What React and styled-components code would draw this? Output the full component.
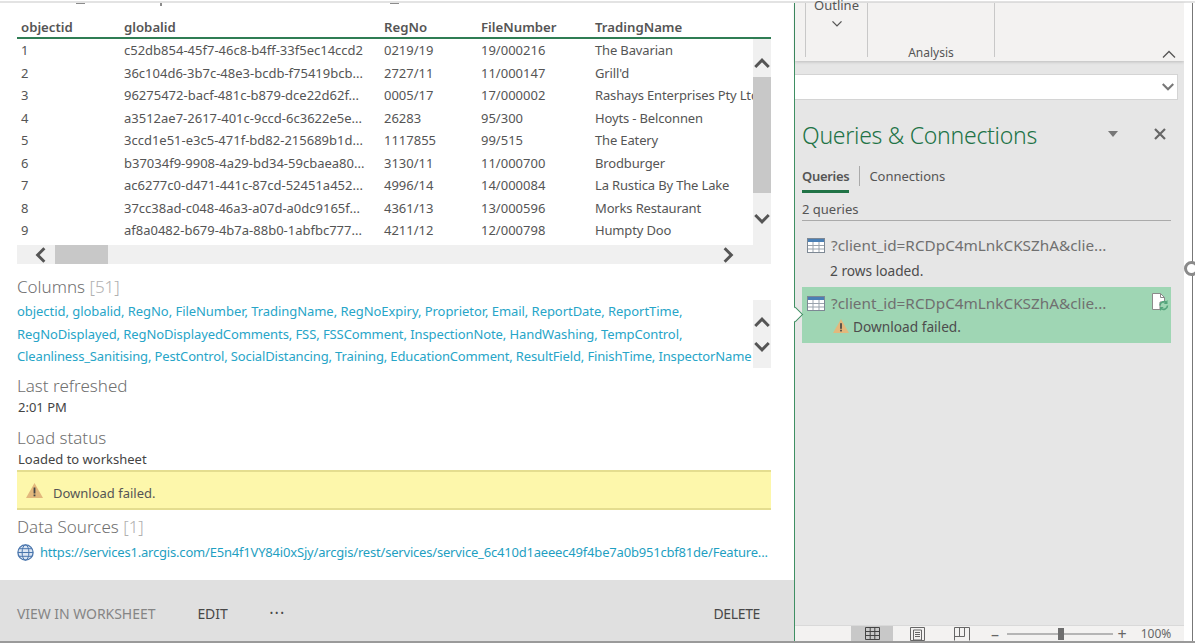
import React from 'react'
import styled, { createGlobalStyle } from 'styled-components'

const GlobalStyle = createGlobalStyle`
  html, body {
    margin: 0;
    padding: 0;
    background: #fff;
    overflow: hidden;
  }
  * { box-sizing: border-box; }
  svg { flex: none; }
`

const FONT = `'Noto Sans', 'Open Sans', sans-serif`

const Page = styled.div`
  width: 1195px;
  height: 643px;
  display: flex;
  flex-direction: column;
  overflow: hidden;
  font-family: ${FONT};
  color: #4a4a4a;
  background: #fff;
`

const TopEdge = styled.div`
  height: 3px;
  flex: none;
  position: relative;
  border-top: 1px solid transparent;
  border-bottom: 2px solid #e3e3e3;
`

const EdgeTicks = styled.div`
  position: absolute;
  top: 2px;
  left: 0;
  display: flex;
  z-index: 1;
`

const EdgeTick = styled.div`
  width: ${(p) => p.$w}px;
  height: ${(p) => p.$h}px;
  margin-left: ${(p) => p.$gap}px;
  background: #8c8c8c;
`

const Main = styled.div`
  flex: 1;
  min-height: 0;
  display: flex;
`

const BottomEdge = styled.div`
  height: 2px;
  flex: none;
  background: #9a9a9a;
`

/* left: query preview flyout */
const Flyout = styled.div`
  width: 795px;
  flex: none;
  display: flex;
  flex-direction: column;
  border-right: 1px solid #3f8f63;
  background: #fff;
`

const FlyoutBody = styled.div`
  flex: 1;
  min-height: 0;
  padding: 14px 23px 0 17px;
  display: flex;
  flex-direction: column;
`

const TableHead = styled.div`
  height: 22px;
  padding-bottom: 1px;
  display: grid;
  grid-template-columns: 107px 260px 97px 114px 1fr;
  align-items: center;
  border-bottom: 2px solid #2f7d54;
  font-size: 13.2px;
  font-weight: 600;
  color: #555;
  span:first-child { padding-left: 4px; }
`

const TableBody = styled.div`
  display: flex;
  height: 206px;
`

const Rows = styled.div`
  flex: 1;
  min-width: 0;
  overflow: hidden;
`

const Row = styled.div`
  height: 22.5px;
  display: grid;
  grid-template-columns: 107px 260px 97px 114px 1fr;
  align-items: center;
  font-size: 13px;
  color: #555;
  white-space: nowrap;
  span:first-child { padding-left: 4px; }
  span:last-child { letter-spacing: -0.15px; }
`

const VScroll = styled.div`
  width: 18px;
  flex: none;
  background: #f0f0f0;
  display: flex;
  flex-direction: column;
  align-items: center;
`

const ArrowSlot = styled.div`
  height: ${(p) => p.$h}px;
  width: ${(p) => (p.$w ? `${p.$w}px` : 'auto')};
  margin-left: ${(p) => (p.$push ? 'auto' : '0')};
  padding: ${(p) => p.$pad || '0'};
  display: flex;
  align-items: center;
  justify-content: center;
  flex: none;
`

const VThumb = styled.div`
  width: 100%;
  height: 116px;
  flex: none;
  background: #c8c8c8;
`

const HScroll = styled.div`
  height: 19px;
  flex: none;
  background: #f0f0f0;
  display: flex;
  align-items: center;
`

const HThumb = styled.div`
  width: 53px;
  height: 100%;
  background: #c8c8c8;
`

const SectionTitle = styled.div`
  font-size: 17px;
  font-weight: 300;
  line-height: 24px;
  color: #707070;
  margin-top: ${(p) => p.$top}px;
`

const Count = styled.span`
  color: #b0b0b0;
`

const ColumnsBlock = styled.div`
  display: flex;
  height: 68px;
  margin-top: 1px;
`

const ColumnsText = styled.div`
  flex: 1;
  min-width: 0;
`

const ColumnsLine = styled.div`
  height: 22.5px;
  line-height: 22.5px;
  font-size: 13px;
  letter-spacing: ${(p) => p.$ls}px;
  color: #27a5c8;
  white-space: nowrap;
`

const MiniScroll = styled.div`
  width: 18px;
  flex: none;
  background: #f0f0f0;
  display: flex;
  flex-direction: column;
  align-items: center;
  justify-content: center;
  gap: 7px;
`

const PlainText = styled.div`
  font-size: 13px;
  line-height: 18px;
  color: #444;
  padding-left: 1px;
`

const WarnBanner = styled.div`
  height: 40px;
  margin-top: 2px;
  flex: none;
  background: #fdf7ab;
  border-top: 2px solid #e4dd8f;
  border-bottom: 2px solid #e4dd8f;
  display: flex;
  align-items: center;
  padding-left: 9px;
  gap: 10px;
  font-size: 13px;
  color: #555;
`

const BannerText = styled.span`
  padding-top: 6px;
`

const SourceRow = styled.div`
  display: flex;
  align-items: center;
  gap: 6px;
  margin-top: 3px;
  height: 20px;
  font-size: 13px;
  letter-spacing: -0.19px;
  color: #1f9fc2;
  white-space: nowrap;
`

const FlyoutFooter = styled.div`
  height: 61px;
  flex: none;
  background: #e0e0e0;
  display: flex;
  align-items: center;
  padding: 6px 34px 0 17px;
  font-size: 14px;
  letter-spacing: -0.05px;
`

const FooterAction = styled.div`
  color: ${(p) => (p.$muted ? '#858585' : '#484848')};
  margin-right: ${(p) => p.$gap || 0}px;
  margin-left: ${(p) => (p.$push ? 'auto' : '0')};
  letter-spacing: ${(p) => (p.$push ? '-0.35px' : 'inherit')};
`

const Dots = styled.div`
  font-size: 9px;
  letter-spacing: 2px;
  color: #484848;
  margin-top: -3px;
`

/* right: task pane */
const Side = styled.div`
  width: 389px;
  flex: none;
  display: flex;
  flex-direction: column;
  background: #e6e6e6;
`

const Ribbon = styled.div`
  height: 58px;
  flex: none;
  background: #f3f2f1;
  box-shadow: 0 1px 3px rgba(0, 0, 0, 0.18);
  display: flex;
  padding-left: 10px;
  position: relative;
  color: #555;
  font-size: 12px;
`

const RibbonGroup = styled.div`
  width: ${(p) => p.$w}px;
  height: 54px;
  flex: none;
  border-left: 1px solid #c8c8c8;
  border-right: ${(p) => (p.$end ? '1px solid #c8c8c8' : '0')};
  display: flex;
  flex-direction: column;
  align-items: center;
  justify-content: ${(p) => (p.$label ? 'flex-end' : 'flex-start')};
`

const GroupLabel = styled.span`
  line-height: 8px;
`

const OutlineLabel = styled.div`
  font-size: 13px;
  line-height: 13px;
  margin-bottom: 6px;
  margin-top: -4px;
`

const CollapseCaret = styled.div`
  position: absolute;
  right: 7px;
  top: 43px;
  line-height: 0;
`

const FormulaRow = styled.div`
  height: 26px;
  margin: 13px 6px 0 0;
  flex: none;
  background: #fff;
  border: 1px solid #d4d4d4;
  border-left: 0;
  display: flex;
  align-items: center;
  justify-content: flex-end;
  padding-right: 2px;
`

const PaneBody = styled.div`
  flex: 1;
  min-height: 0;
  padding: 16px 13px 0 7px;
  display: flex;
  flex-direction: column;
`

const PaneHeader = styled.div`
  height: 36px;
  display: flex;
  align-items: center;
`

const PaneTitle = styled.div`
  font-size: 23px;
  font-weight: 300;
  color: #217346;
  flex: 1;
  padding-top: 2px;
  letter-spacing: -0.27px;
`

const PaneControl = styled.div`
  line-height: 0;
  margin-right: ${(p) => p.$gap}px;
`

const Tabs = styled.div`
  display: flex;
  align-items: flex-start;
  margin-top: 14px;
  height: 29px;
`

const Tab = styled.div`
  font-size: 13px;
  line-height: 20px;
  font-weight: ${(p) => (p.$active ? 600 : 400)};
  height: 27px;
  color: #555;
  letter-spacing: ${(p) => (p.$active ? '-0.3px' : '0')};
  border-bottom: ${(p) => (p.$active ? '3px solid #217346' : '0')};
`

const TabDivider = styled.div`
  width: 1px;
  height: 20px;
  background: #aaa;
  margin: 0 9px 0 10px;
`

const QueryCount = styled.div`
  margin-top: 4px;
  height: 22px;
  line-height: 20px;
  font-size: 13px;
  color: #555;
  border-bottom: 1px solid #aaa;
`

const QueryItem = styled.div`
  height: ${(p) => p.$h}px;
  margin-top: ${(p) => p.$top}px;
  padding-left: 5px;
  background: ${(p) => (p.$selected ? '#9fd6b4' : 'transparent')};
  position: relative;
`

const QueryName = styled.div`
  display: flex;
  align-items: center;
  gap: 6px;
  height: 20px;
  margin-top: ${(p) => p.$top}px;
  font-size: 15.3px;
  color: #707070;
  white-space: nowrap;
`

const QueryStatus = styled.div`
  display: flex;
  align-items: center;
  gap: 4px;
  padding-left: ${(p) => p.$pad}px;
  height: 20px;
  margin-top: ${(p) => p.$top}px;
  font-size: 13.7px;
  color: #4d4d4d;
`

const QueryBadge = styled.div`
  position: absolute;
  right: 2px;
  top: 6px;
  line-height: 0;
`

const Pointer = styled.div`
  position: absolute;
  left: -12px;
  top: 22px;
  width: 11px;
  height: 11px;
  background: #fff;
  border-top: 1px solid #3f8f63;
  border-right: 1px solid #3f8f63;
  transform: rotate(45deg);
`

const StatusBar = styled.div`
  height: 16px;
  flex: none;
  background: #f3f2f1;
  border-top: 1px solid #d9d9d9;
  display: flex;
  align-items: center;
  padding-left: 56px;
  color: #666;
  font-size: 12px;
`

const ViewButton = styled.div`
  width: ${(p) => p.$w}px;
  height: 100%;
  display: flex;
  align-items: center;
  justify-content: center;
  flex: none;
  font-size: ${(p) => p.$size || 12}px;
  background: ${(p) => (p.$active ? '#c8c8c8' : 'transparent')};
`

const ZoomSlider = styled.div`
  width: 111px;
  height: 2px;
  background: #b5b5b5;
  margin-right: 3px;
  position: relative;
`

const ZoomThumb = styled.div`
  position: absolute;
  left: 51px;
  top: -5px;
  width: 6px;
  height: 12px;
  background: #6e6e6e;
`

const Gutter = styled.div`
  flex: 1;
  position: relative;
  background: #fff;
`

const GutterLine = styled.div`
  position: absolute;
  left: 8px;
  top: 0;
  bottom: 0;
  width: 1px;
  background: #777;
`

const Handle = styled.div`
  position: absolute;
  left: 0;
  top: 258px;
  width: 15px;
  height: 15px;
  border: 3px solid #8a8a8a;
  border-radius: 50%;
  background: #fff;
`

const Chevron = ({ dir = 'down', size = 18, color = '#555', width = 2.6 }) => {
  const pts = {
    up: '2,11.5 8,5.5 14,11.5',
    down: '2,4.5 8,10.5 14,4.5',
    left: '11,2 5,8 11,14',
    right: '5,2 11,8 5,14',
  }
  return (
    <svg width={size} height={size} viewBox="0 0 16 16">
      <polyline points={pts[dir]} fill="none" stroke={color} strokeWidth={width} />
    </svg>
  )
}

const TableIcon = () => (
  <svg width="18" height="15" viewBox="0 0 18 15">
    <rect x="0.5" y="0.5" width="17" height="14" fill="#fff" stroke="#7d8894" />
    <rect x="1" y="1" width="16" height="3" fill="#4a7fb5" />
    <path d="M1 7.5H17M1 11H17M6 4V14M12 4V14" stroke="#9aa3ad" strokeWidth="1" />
  </svg>
)

const WarnIcon = ({ w = 17, h = 15 }) => (
  <svg width={w} height={h} viewBox="0 0 17 15">
    <path d="M8.5 0L17 15H0Z" fill="#e3b87c" />
    <rect x="7.6" y="4.5" width="1.8" height="6" fill="#444" />
    <rect x="7.6" y="11.5" width="1.8" height="1.8" fill="#444" />
  </svg>
)

const GlobeIcon = () => (
  <svg width="17" height="17" viewBox="0 0 17 17">
    <circle cx="8.5" cy="8.5" r="7.6" fill="#dce6f3" stroke="#4a76ad" strokeWidth="1.3" />
    <ellipse cx="8.5" cy="8.5" rx="3.4" ry="7.6" fill="none" stroke="#4a76ad" />
    <path d="M1 8.5H16M2 4.7H15M2 12.3H15" stroke="#4a76ad" />
  </svg>
)

const RefreshDocIcon = () => (
  <svg width="18" height="18" viewBox="0 0 18 18">
    <path d="M1.5 0.5H9.5L13.5 4.5V9H9V16.5H1.5Z" fill="#fff" stroke="#8a8a8a" />
    <path d="M9.5 0.5V4.5H13.5" fill="none" stroke="#8a8a8a" />
    <path d="M9 12.5A4 4 0 0 1 15.5 9.5M16.5 12.5A4 4 0 0 1 10 15.5" fill="none" stroke="#54a57c" strokeWidth="1.6" />
    <path d="M16.5 7V11H12.8Z" fill="#54a57c" />
    <path d="M9 18V14H12.7Z" fill="#54a57c" />
  </svg>
)

const GridIcon = () => (
  <svg width="15" height="13" viewBox="0 0 15 13">
    <path d="M0.5 0.5H14.5V12.5H0.5ZM0.5 4.5H14.5M0.5 8.5H14.5M5.2 0.5V12.5M9.8 0.5V12.5" fill="none" stroke="#444" />
  </svg>
)

const PageIcon = () => (
  <svg width="15" height="14" viewBox="0 0 15 14">
    <path d="M0.5 0.5H14.5V13.5H0.5Z" fill="none" stroke="#666" />
    <path d="M3.5 3V13H11.5V3ZM5 5.5H10M5 7.5H10M5 9.5H10" fill="none" stroke="#666" />
  </svg>
)

const BreakIcon = () => (
  <svg width="16" height="14" viewBox="0 0 16 14">
    <path d="M0.5 13.5V0.5H15.5V13.5M0.5 9.5H10.5V0.5M5.5 0.5V9.5" fill="none" stroke="#666" />
  </svg>
)

const rows = [
  ['1', 'c52db854-45f7-46c8-b4ff-33f5ec14ccd2', '0219/19', '19/000216', 'The Bavarian'],
  ['2', '36c104d6-3b7c-48e3-bcdb-f75419bcb...', '2727/11', '11/000147', "Grill'd"],
  ['3', '96275472-bacf-481c-b879-dce22d62f...', '0005/17', '17/000002', 'Rashays Enterprises Pty Ltd'],
  ['4', 'a3512ae7-2617-401c-9ccd-6c3622e5e...', '26283', '95/300', 'Hoyts - Belconnen'],
  ['5', '3ccd1e51-e3c5-471f-bd82-215689b1d...', '1117855', '99/515', 'The Eatery'],
  ['6', 'b37034f9-9908-4a29-bd34-59cbaea80...', '3130/11', '11/000700', 'Brodburger'],
  ['7', 'ac6277c0-d471-441c-87cd-52451a452...', '4996/14', '14/000084', 'La Rustica By The Lake'],
  ['8', '37cc38ad-c048-46a3-a07d-a0dc9165f...', '4361/13', '13/000596', 'Morks Restaurant'],
  ['9', 'af8a0482-b679-4b7a-88b0-1abfbc777...', '4211/12', '12/000798', 'Humpty Doo'],
]

const columnLines = [
  ['objectid, globalid, RegNo, FileNumber, TradingName, RegNoExpiry, Proprietor, Email, ReportDate, ReportTime,', -0.05],
  ['RegNoDisplayed, RegNoDisplayedComments, FSS, FSSComment, InspectionNote, HandWashing, TempControl,', -0.09],
  ['Cleanliness_Sanitising, PestControl, SocialDistancing, Training, EducationComment, ResultField, FinishTime, InspectorName', -0.14],
]

const sourceUrl =
  'https://services1.arcgis.com/E5n4f1VY84i0xSjy/arcgis/rest/services/service_6c410d1aeeec49f4be7a0b951cbf81de/Feature...'

const App = () => (
  <>
    <GlobalStyle />
    <Page>
      <TopEdge>
        <EdgeTicks>
          <EdgeTick $w={9} $h={1} $gap={76} />
          <EdgeTick $w={2} $h={3} $gap={75} />
          <EdgeTick $w={9} $h={1} $gap={228} />
        </EdgeTicks>
      </TopEdge>
      <Main>
        <Flyout>
          <FlyoutBody>
            <TableHead>
              <span>objectid</span>
              <span>globalid</span>
              <span>RegNo</span>
              <span>FileNumber</span>
              <span>TradingName</span>
            </TableHead>
            <TableBody>
              <Rows>
                {rows.map((r) => (
                  <Row key={r[0]}>
                    {r.map((c, i) => (
                      <span key={i}>{c}</span>
                    ))}
                  </Row>
                ))}
              </Rows>
              <VScroll>
                <ArrowSlot $h={38} $pad="10px 0 0">
                  <Chevron dir="up" />
                </ArrowSlot>
                <VThumb />
                <ArrowSlot $h={52}>
                  <Chevron dir="down" />
                </ArrowSlot>
              </VScroll>
            </TableBody>
            <HScroll>
              <ArrowSlot $h={19} $w={38} $pad="0 0 0 10px">
                <Chevron dir="left" />
              </ArrowSlot>
              <HThumb />
              <ArrowSlot $h={19} $w={86} $push>
                <Chevron dir="right" />
              </ArrowSlot>
            </HScroll>
            <SectionTitle $top={11}>
              Columns <Count>[51]</Count>
            </SectionTitle>
            <ColumnsBlock>
              <ColumnsText>
                {columnLines.map(([text, ls]) => (
                  <ColumnsLine key={text} $ls={ls}>
                    {text}
                  </ColumnsLine>
                ))}
              </ColumnsText>
              <MiniScroll>
                <Chevron dir="up" />
                <Chevron dir="down" />
              </MiniScroll>
            </ColumnsBlock>
            <SectionTitle $top={6}>Last refreshed</SectionTitle>
            <PlainText>2:01 PM</PlainText>
            <SectionTitle $top={10}>Load status</SectionTitle>
            <PlainText>Loaded to worksheet</PlainText>
            <WarnBanner>
              <WarnIcon />
              <BannerText>Download failed.</BannerText>
            </WarnBanner>
            <SectionTitle $top={5}>
              Data Sources <Count>[1]</Count>
            </SectionTitle>
            <SourceRow>
              <GlobeIcon />
              <span>{sourceUrl}</span>
            </SourceRow>
          </FlyoutBody>
          <FlyoutFooter>
            <FooterAction $muted $gap={42}>
              VIEW IN WORKSHEET
            </FooterAction>
            <FooterAction $gap={42}>EDIT</FooterAction>
            <Dots>•••</Dots>
            <FooterAction $push>DELETE</FooterAction>
          </FlyoutFooter>
        </Flyout>

        <Side>
          <Ribbon>
            <RibbonGroup $w={62}>
              <OutlineLabel>Outline</OutlineLabel>
              <Chevron size={12} width={1.8} color="#555" />
            </RibbonGroup>
            <RibbonGroup $w={128} $label $end>
              <GroupLabel>Analysis</GroupLabel>
            </RibbonGroup>
            <CollapseCaret>
              <Chevron dir="up" size={16} width={1.3} />
            </CollapseCaret>
          </Ribbon>
          <FormulaRow>
            <Chevron size={14} width={2.4} color="#777" />
          </FormulaRow>
          <PaneBody>
            <PaneHeader>
              <PaneTitle>Queries &amp; Connections</PaneTitle>
              <PaneControl $gap={36}>
                <svg width="10" height="6" viewBox="0 0 10 6">
                  <path d="M0 0H10L5 6Z" fill="#777" />
                </svg>
              </PaneControl>
              <PaneControl $gap={5}>
                <svg width="12" height="12" viewBox="0 0 12 12">
                  <path d="M1 1L11 11M11 1L1 11" stroke="#666" strokeWidth="2.2" />
                </svg>
              </PaneControl>
            </PaneHeader>
            <Tabs>
              <Tab $active>Queries</Tab>
              <TabDivider />
              <Tab>Connections</Tab>
            </Tabs>
            <QueryCount>2 queries</QueryCount>
            <QueryItem $h={57} $top={9}>
              <QueryName $top={5}>
                <TableIcon />
                <span>?client_id=RCDpC4mLnkCKSZhA&amp;clie...</span>
              </QueryName>
              <QueryStatus $pad={23} $top={5}>2 rows loaded.</QueryStatus>
            </QueryItem>
            <QueryItem $h={56} $top={0} $selected>
              <Pointer />
              <QueryName $top={6}>
                <TableIcon />
                <span>?client_id=RCDpC4mLnkCKSZhA&amp;clie...</span>
              </QueryName>
              <QueryStatus $pad={26} $top={3}>
                <WarnIcon w={16} h={14} />
                <span>Download failed.</span>
              </QueryStatus>
              <QueryBadge>
                <RefreshDocIcon />
              </QueryBadge>
            </QueryItem>
          </PaneBody>
          <StatusBar>
            <ViewButton $w={42} $active>
              <GridIcon />
            </ViewButton>
            <ViewButton $w={48}>
              <PageIcon />
            </ViewButton>
            <ViewButton $w={42}>
              <BreakIcon />
            </ViewButton>
            <ViewButton $w={24} $size={16}>–</ViewButton>
            <ZoomSlider>
              <ZoomThumb />
            </ZoomSlider>
            <ViewButton $w={12} $size={16}>+</ViewButton>
            <ViewButton $w={56}>100%</ViewButton>
          </StatusBar>
        </Side>

        <Gutter>
          <GutterLine />
          <Handle />
        </Gutter>
      </Main>
      <BottomEdge />
    </Page>
  </>
)

export default App
